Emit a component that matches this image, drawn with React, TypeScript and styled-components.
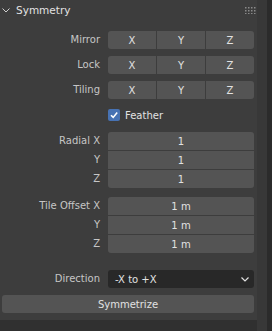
import * as React from "react";
import styled, { createGlobalStyle } from "styled-components";

const GlobalStyle = createGlobalStyle`
  html, body {
    margin: 0;
    padding: 0;
    background: #303030;
  }
  body {
    font-family: "DejaVu Sans", "Liberation Sans", sans-serif;
    font-size: 10px;
  }
`;

const Screen = styled.div`
  width: 272px;
  height: 331px;
  display: flex;
  background: #303030;
  overflow: hidden;
`;

const Panel = styled.div`
  width: 257px;
  height: 320px;
  background: #3d3d3d;
  display: flex;
  flex-direction: column;
`;

const Gutter = styled.div`
  width: 10px;
  background: #383838;
`;

const Edge = styled.div`
  flex: 1;
  background: #2b2b2b;
`;

const Header = styled.div`
  height: 20px;
  display: flex;
  align-items: center;
  padding: 0 0 0 2px;
  color: #e2e2e2;
  font-size: 10.5px;
`;

const HeaderTitle = styled.span`
  margin-left: 6px;
  flex: 1;
`;

const Grip = styled.svg`
  margin-right: 1px;
`;

const Body = styled.div`
  display: grid;
  grid-template-columns: 100px 146px;
  column-gap: 8px;
  padding: 11px 0 0 0;
  align-items: center;
`;

const Label = styled.div<{ $top?: number }>`
  text-align: right;
  color: #c6c6c6;
  height: 18px;
  line-height: 18px;
  margin-top: ${(p) => p.$top ?? 0}px;
`;

const Segmented = styled.div<{ $top?: number }>`
  display: grid;
  grid-template-columns: 1fr 1fr 1fr;
  gap: 1px;
  height: 18px;
  border-radius: 3px;
  overflow: hidden;
  background: #3d3d3d;
  margin-top: ${(p) => p.$top ?? 0}px;
`;

const Cell = styled.div`
  background: #545454;
  color: #e2e2e2;
  display: flex;
  align-items: center;
  justify-content: center;
`;

const Stack = styled.div<{ $top?: number }>`
  display: grid;
  grid-auto-rows: 18px;
  row-gap: 1px;
  border-radius: 3px;
  overflow: hidden;
  background: #3d3d3d;
  margin-top: ${(p) => p.$top ?? 0}px;
  align-self: start;
`;

const LabelStack = styled.div<{ $top?: number }>`
  display: grid;
  grid-auto-rows: 18px;
  row-gap: 1px;
  margin-top: ${(p) => p.$top ?? 0}px;
  align-self: start;
  text-align: right;
  color: #c6c6c6;
  line-height: 18px;
`;

const CheckRow = styled.label`
  grid-column: 2;
  margin-top: 7px;
  height: 18px;
  display: flex;
  align-items: center;
  gap: 5px;
  color: #e2e2e2;
`;

const CheckBox = styled.span`
  width: 12px;
  height: 12px;
  border-radius: 2px;
  background: #4772b3;
  display: flex;
  align-items: center;
  justify-content: center;
`;

const Dropdown = styled.div`
  height: 18px;
  margin-top: 17px;
  background: #282828;
  border-radius: 3px;
  color: #e2e2e2;
  display: flex;
  align-items: center;
  justify-content: space-between;
  padding: 0 5px 0 7px;
`;

const WideButton = styled.div`
  grid-column: 1 / span 2;
  margin: 7px 0 0 2px;
  height: 18px;
  background: #545454;
  border-radius: 3px;
  color: #e2e2e2;
  display: flex;
  align-items: center;
  justify-content: center;
`;

const XYZ = () => (
  <>
    <Cell>X</Cell>
    <Cell>Y</Cell>
    <Cell>Z</Cell>
  </>
);

export default function App() {
  return (
    <Screen>
      <GlobalStyle />
      <Panel>
        <Header>
          <svg width="8" height="5" viewBox="0 0 8 5">
            <path d="M0.5 0.5 L4 4 L7.5 0.5" stroke="#cfcfcf" strokeWidth="1" fill="none" />
          </svg>
          <HeaderTitle>Symmetry</HeaderTitle>
          <Grip width="11" height="7" viewBox="0 0 11 7">
            {[0, 3, 6].map((y) =>
              [0, 3, 6, 9].map((x) => (
                <rect key={`${x}-${y}`} x={x} y={y} width="1.5" height="1.5" fill="#8a8a8a" />
              ))
            )}
          </Grip>
        </Header>
        <Body>
          <Label>Mirror</Label>
          <Segmented><XYZ /></Segmented>
          <Label $top={7}>Lock</Label>
          <Segmented $top={7}><XYZ /></Segmented>
          <Label $top={7}>Tiling</Label>
          <Segmented $top={7}><XYZ /></Segmented>
          <CheckRow>
            <CheckBox>
              <svg width="10" height="10" viewBox="0 0 10 10">
                <path d="M2 5.2 L4.2 7.4 L8.2 2.6" stroke="#ffffff" strokeWidth="1.6" fill="none" />
              </svg>
            </CheckBox>
            Feather
          </CheckRow>
          <LabelStack $top={8}>
            <div>Radial X</div>
            <div>Y</div>
            <div>Z</div>
          </LabelStack>
          <Stack $top={8}>
            <Cell>1</Cell>
            <Cell>1</Cell>
            <Cell>1</Cell>
          </Stack>
          <LabelStack $top={9}>
            <div>Tile Offset X</div>
            <div>Y</div>
            <div>Z</div>
          </LabelStack>
          <Stack $top={9}>
            <Cell>1 m</Cell>
            <Cell>1 m</Cell>
            <Cell>1 m</Cell>
          </Stack>
          <Label $top={17}>Direction</Label>
          <Dropdown>
            <span>-X to +X</span>
            <svg width="8" height="5" viewBox="0 0 8 5">
              <path d="M0.5 0.5 L4 4 L7.5 0.5" stroke="#e0e0e0" strokeWidth="1.2" fill="none" />
            </svg>
          </Dropdown>
          <WideButton>Symmetrize</WideButton>
        </Body>
      </Panel>
      <Gutter />
      <Edge />
    </Screen>
  );
}
